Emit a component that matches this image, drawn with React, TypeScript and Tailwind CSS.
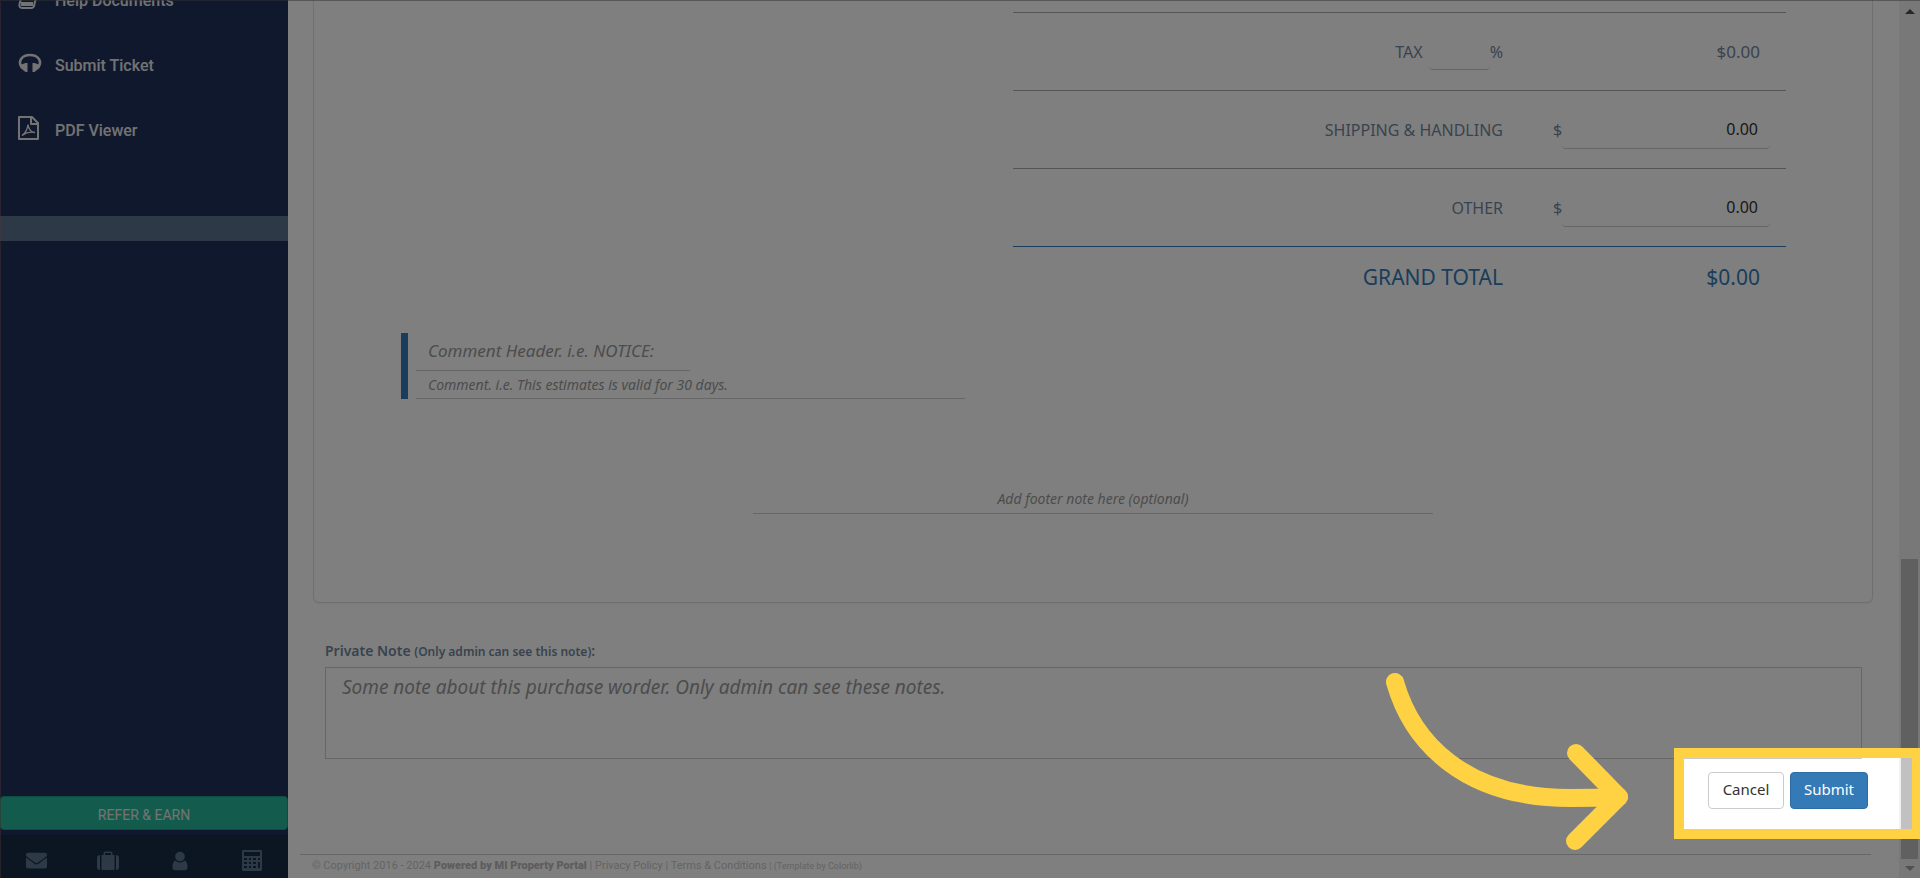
import { FaEnvelope } from "react-icons/fa";

function BookIcon() {
  return (
    <svg viewBox="0 0 22 24" className="w-[22px] h-6" fill="none" stroke="currentColor">
      <path d="M6 3H20L16 20Q15.500 22 14 22H4Q1 22 1.500 18Z" strokeWidth="2" strokeLinejoin="round" />
      <path d="M3 18H15" strokeWidth="4" />
    </svg>
  );
}

function HeadphonesIcon() {
  return (
    <svg viewBox="0 0 24 20" className="w-6 h-5" fill="none" stroke="currentColor">
      <path d="M3.500 14C-.5 8 4 2 12 2S24.500 8 20.500 14" strokeWidth="2.600" />
      <path d="M2 12L7.500 10H9.500V19H7.500L2.500 15ZM22 12L16.500 10H14.500V19H16.500L21.500 15Z" fill="currentColor" stroke="none" />
    </svg>
  );
}

function PdfIcon() {
  return (
    <svg viewBox="0 0 21 24" className="w-[21px] h-6" fill="none" stroke="currentColor">
      <path d="M1 1H14L20 7V23H1Z M13 1V8H20" strokeWidth="2" strokeLinejoin="round" />
      <path d="M4 19.500C7 18 9.500 13 10 8.500C10.500 13 13 16 17 16.500C12 15.500 7.500 17 4 19.500Z" strokeWidth="1.400" />
    </svg>
  );
}

function SuitcaseIcon() {
  return (
    <svg viewBox="0 0 22 19" className="w-[22px] h-[19px]" fill="currentColor">
      <path d="M3 4V19Q0 19 0 16V7Q0 4 3 4ZM19 4V19Q22 19 22 16V7Q22 4 19 4Z" />
      <path fillRule="evenodd" d="M4.500 4H6.500V2Q6.500 .5 8 .5H14Q15.500 .5 15.500 2V4H17.500V19H4.500ZM8 4H14V2H8Z" />
    </svg>
  );
}

function UserIcon() {
  return (
    <svg viewBox="0 0 16 20" className="w-4 h-5" fill="currentColor">
      <circle cx="8" cy="5.500" r="4.800" />
      <path d="M3.500 9.500C5.500 12 10.500 12 12.500 9.500C15 10.500 15.500 13 15.500 16Q15.500 19.300 12.500 19.300H3.500Q.5 19.300 .5 16C.5 13 1 10.500 3.500 9.500Z" />
    </svg>
  );
}

function CalculatorIcon() {
  return (
    <svg viewBox="0 0 20 21" className="w-5 h-[21px]" fill="currentColor">
      <path fillRule="evenodd" d="M1 0H19L20 1V20L19 21H1L0 20V1ZM2 2V6H18V2ZM2 8V10H5V8ZM7 8V10H9V8ZM11 8V10H14V8ZM16 8V10H18V8ZM2 12V14H5V12ZM7 12V14H9V12ZM11 12V14H14V12ZM16 12V18H18V12ZM2 16V18H5V16ZM7 16V18H9V16ZM11 16V18H14V16Z" />
    </svg>
  );
}

const menu = [
  { label: "Help Documents", icon: <BookIcon /> },
  { label: "Submit Ticket", icon: <HeadphonesIcon /> },
  { label: "PDF Viewer", icon: <PdfIcon /> },
];

const shortcuts = [
  { label: "Messages", icon: <FaEnvelope size={21} /> },
  { label: "Portfolio", icon: <SuitcaseIcon /> },
  { label: "Profile", icon: <UserIcon /> },
  { label: "Calculator", icon: <CalculatorIcon /> },
];

function Sidebar() {
  return (
    <aside className="w-72 shrink-0 flex flex-col bg-[#20305b] font-[Roboto,sans-serif]">
      <nav className="-mt-8">
        {menu.map((item) => (
          <a key={item.label} href="#" className="flex items-center h-[65px] pl-[18px] text-base font-medium text-[#e7e7e7]">
            <span className="w-[37px] pb-[6px]">{item.icon}</span>
            {item.label}
          </a>
        ))}
      </nav>
      <div className="mt-[53px] h-[25px] bg-[#5a738e]" />
      <button className="mt-auto mb-[5px] h-[34px] pt-[3px] rounded bg-[#26b99a] border border-[#169f85] text-sm text-[#e7e7e7]">REFER &amp; EARN</button>
      <div className="grid grid-cols-4 h-[43px] bg-[#172d44] text-[#5a738e]">
        {shortcuts.map((item) => (
          <a key={item.label} href="#" aria-label={item.label} className="flex items-center justify-center pt-2">
            {item.icon}
          </a>
        ))}
      </div>
    </aside>
  );
}

function AmountRow({ id, label }: { id: string; label: string }) {
  return (
    <tr className="h-[78px] border-t border-[#aaa]">
      <td className="pr-2 text-right">
        <label htmlFor={id}>{label}</label>
      </td>
      <td className="pl-[42px] pr-4">
        <div className="flex items-center">
          $
          <input id={id} defaultValue="0.00" className="min-w-0 flex-1 h-[38px] px-3 rounded border-b border-[#ccc] text-right text-[#333]" />
        </div>
      </td>
    </tr>
  );
}

function Totals() {
  return (
    <table className="w-[773px] ml-auto mr-[86px] table-fixed text-base">
      <colgroup>
        <col />
        <col className="w-[275px]" />
      </colgroup>
      <tbody>
        <tr className="h-[78px] border-t border-[#aaa]">
          <td className="pr-2">
            <div className="flex items-center justify-end">
              <label htmlFor="tax" className="mr-[6px]">TAX</label>
              <input id="tax" className="w-[61px] h-9 rounded border-b border-[#ccc]" />
              %
            </div>
          </td>
          <td className="pr-[26px] text-right text-[17px]">$0.00</td>
        </tr>
        <AmountRow id="shipping" label="SHIPPING & HANDLING" />
        <AmountRow id="other" label="OTHER" />
        <tr className="h-[62px] border-t border-[#337ab7] text-[21px] text-[#337ab7]">
          <td className="pr-2 text-right">GRAND TOTAL</td>
          <td className="pr-[26px] text-right">$0.00</td>
        </tr>
      </tbody>
    </table>
  );
}

function Scrollbar() {
  return (
    <div className="w-[21px] shrink-0 flex flex-col items-center bg-[#f1f1f1] pt-[9px] pb-[7px]">
      <svg viewBox="0 0 10 5" className="w-[10px] h-[5px]" fill="#505050"><path d="M0 5L5 0L10 5Z" /></svg>
      <div className="mt-auto h-[300px] w-[17px] bg-[#c1c1c1]" />
      <svg viewBox="0 0 10 5" className="mt-[7px] w-[10px] h-[5px]" fill="#a0a0a0"><path d="M0 0L5 5L10 0Z" /></svg>
    </div>
  );
}

export default function App() {
  return (
    <div className="relative flex min-h-screen overflow-hidden bg-white font-['Noto_Sans',sans-serif] text-[#73879c]">
      <Sidebar />

      <main className="flex-1 min-w-0 flex flex-col">
        <section className="ml-[25px] mr-[26px] h-[603px] pt-3 border-x border-b border-[#e0e0e0] rounded-b-md shadow-xs">
          <Totals />
          <div className="ml-[87px] mt-6 w-[564px] h-[66px] border-l-[7px] border-[#337ab7] pl-2">
            <input aria-label="Comment header" placeholder="Comment Header. i.e. NOTICE:" className="block w-[274px] h-[38px] px-3 pb-[2px] border-b border-[#ccc] text-[17px] italic placeholder:text-[#999]" />
            <input aria-label="Comment" placeholder="Comment. i.e. This estimates is valid for 30 days." className="block w-full h-7 px-3 border-b border-[#ccc] text-sm italic placeholder:text-[#999]" />
          </div>
          <input aria-label="Footer note" placeholder="Add footer note here (optional)" className="block mx-auto mt-[85px] w-[680px] h-[30px] border-b border-[#ccc] text-sm italic text-center placeholder:text-[#999]" />
        </section>

        <form className="mt-[38px] pl-[37px] pr-[37px]">
          <label htmlFor="note" className="block h-[26px] text-sm font-semibold">
            Private Note <span className="text-xs">(Only admin can see this note)</span>:
          </label>
          <textarea id="note" placeholder="Some note about this purchase worder. Only admin can see these notes." className="block w-full h-[92px] px-4 py-[5px] border border-[#ccc] text-[19px] italic placeholder:text-[#999]" />
          <div className="mt-[13px] -mr-[6px] flex justify-end gap-[6px] text-[15px]">
            <button type="button" className="h-[37px] w-[76px] pb-[2px] rounded border border-[#ccc] bg-white text-[#333]">Cancel</button>
            <button type="submit" className="h-[37px] w-[78px] pb-[2px] rounded border border-[#2e6da4] bg-[#337ab7] text-white">Submit</button>
          </div>
        </form>

        <footer className="mt-auto ml-3 mr-7 h-6 border-t border-[#ccc] pl-3 pt-[3px] text-[11px] leading-4 text-[#c8c8c8] font-[Roboto,sans-serif]">
          © Copyright 2016 - 2024 <b className="font-black text-[#bbb]">Powered by MI Property Portal</b> | <a href="#">Privacy Policy</a> | <a href="#">Terms &amp; Conditions</a>{" "}
          <small className="text-[9px]">| (Template by <a href="#">Colorlib</a>)</small>
        </footer>
      </main>

      <Scrollbar />

      {/* window edge */}
      <div className="pointer-events-none absolute inset-0 border-t border-l border-t-[#666]/50 border-l-[#966]/40" />

      {/* dimmed backdrop with a cut-out around the form buttons */}
      <div className="pointer-events-none absolute right-[8px] bottom-[49px] w-[228px] h-[71px] shadow-[0_0_0_3000px_rgba(0,0,0,0.5)]" />
      <div className="pointer-events-none absolute -right-[2px] bottom-[39px] w-[248px] h-[91px] border-10 border-[#ffd243]" />
      <svg viewBox="0 0 248 180" className="pointer-events-none absolute right-[288px] bottom-[26px] w-[248px] h-[180px]" fill="none" stroke="#ffd243" strokeWidth="18" strokeLinecap="round" strokeLinejoin="round">
        <path d="M11 10C28 70 80 126 186 126Q212 126 235 125" />
        <path d="M192 81L235 125L191 169" />
      </svg>
    </div>
  );
}
